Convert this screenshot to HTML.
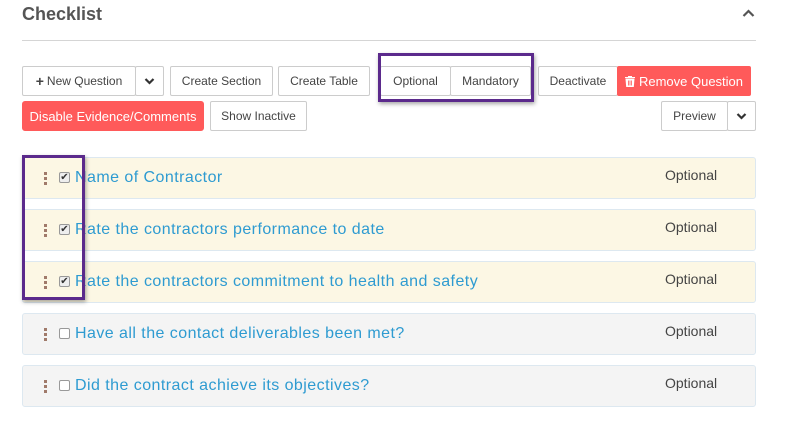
<!DOCTYPE html>
<html><head><meta charset="utf-8"><style>
*{box-sizing:border-box;margin:0;padding:0}
body{width:798px;height:438px;background:#fff;font-family:"Liberation Sans",sans-serif;position:relative;overflow:hidden;color:#555}
.a{position:absolute}
.btn{position:absolute;border:1px solid #ccc;background:#fff;font-size:12px;color:#444;display:flex;align-items:center;justify-content:center;border-radius:2px}
.red{background:#ff5a5a;border-color:#ff5a5a;color:#fff}
.row{position:absolute;left:22px;width:734px;height:42px;border:1px solid #dde8f0;border-radius:3px}
.y{background:#fcf7e4}.g{background:#f4f4f4}
.row .dots{position:absolute;left:21px;top:14px;width:3px}
.row .dots i{display:block;width:3px;height:3px;background:#a07a6a;margin-bottom:2px}
.row .cb{position:absolute;left:36px;top:14px;width:11px;height:11px;border:1px solid #999;border-radius:2px;background:#eee;font-size:10px;line-height:9px;text-align:center;color:#333}
.row .t{position:absolute;left:52px;top:11px;font-size:16px;letter-spacing:0.45px;color:#2e9bd1}
.row .o{position:absolute;left:642px;top:9px;font-size:14px;color:#444}
.pb{position:absolute;border:3px solid #5b2a8c;box-shadow:1px 2px 4px rgba(0,0,0,.35)}
</style></head><body>
<div class="a" style="left:22px;top:4px;font-size:18px;font-weight:bold;color:#555">Checklist</div>
<svg class="a" style="left:742px;top:9px" width="13" height="9"><path d="M1.5 7 L6.5 2 L11.5 7" stroke="#555" stroke-width="2.2" fill="none"/></svg>
<div class="a" style="left:22px;top:40px;width:734px;height:1px;background:#d5d5d5"></div>

<div class="btn" style="left:22px;top:66px;width:114px;height:30px"><b style="font-size:14px;margin-right:3px">+</b>New Question</div>
<div class="btn" style="left:135px;top:66px;width:29px;height:30px"><svg width="11" height="8"><path d="M1.5 2 L5.5 6 L9.5 2" stroke="#333" stroke-width="2.2" fill="none"/></svg></div>
<div class="btn" style="left:170px;top:66px;width:103px;height:30px">Create Section</div>
<div class="btn" style="left:278px;top:66px;width:92px;height:30px">Create Table</div>
<div class="btn" style="left:380px;top:66px;width:71px;height:30px">Optional</div>
<div class="btn" style="left:450px;top:66px;width:81px;height:30px">Mandatory</div>
<div class="btn" style="left:538px;top:66px;width:80px;height:30px">Deactivate</div>
<div class="btn red" style="left:617px;top:66px;width:134px;height:30px;font-size:13px"><svg width="10" height="11" style="margin-right:4px"><path d="M0 1.5H10M3.5 1.5V0H6.5V1.5M1 3H9L8.3 11H1.7Z" fill="#fff" stroke="#fff" stroke-width="1"/><path d="M3.5 4.5V9.5M5 4.5V9.5M6.5 4.5V9.5" stroke="#ff5a5a" stroke-width="0.8"/></svg>Remove Question</div>
<div class="btn red" style="left:22px;top:101px;width:182px;height:30px;font-size:13px;border-radius:3px">Disable Evidence/Comments</div>
<div class="btn" style="left:210px;top:101px;width:97px;height:30px">Show Inactive</div>
<div class="btn" style="left:661px;top:101px;width:67px;height:30px">Preview</div>
<div class="btn" style="left:727px;top:101px;width:29px;height:30px"><svg width="11" height="8"><path d="M1.5 2 L5.5 6 L9.5 2" stroke="#333" stroke-width="2.2" fill="none"/></svg></div>

<div class="row y" style="top:157px"><div class="dots"><i></i><i></i><i></i></div><div class="cb">✔</div><div class="t">Name of Contractor</div><div class="o">Optional</div></div>
<div class="row y" style="top:209px"><div class="dots"><i></i><i></i><i></i></div><div class="cb">✔</div><div class="t">Rate the contractors performance to date</div><div class="o">Optional</div></div>
<div class="row y" style="top:261px"><div class="dots"><i></i><i></i><i></i></div><div class="cb">✔</div><div class="t">Rate the contractors commitment to health and safety</div><div class="o">Optional</div></div>
<div class="row g" style="top:313px"><div class="dots"><i></i><i></i><i></i></div><div class="cb" style="background:#fff"></div><div class="t">Have all the contact deliverables been met?</div><div class="o">Optional</div></div>
<div class="row g" style="top:365px"><div class="dots"><i></i><i></i><i></i></div><div class="cb" style="background:#fff"></div><div class="t">Did the contract achieve its objectives?</div><div class="o">Optional</div></div>

<div class="pb" style="left:378px;top:53px;width:156px;height:49px"></div>
<div class="pb" style="left:22px;top:155px;width:63px;height:145px"></div>
</body></html>
